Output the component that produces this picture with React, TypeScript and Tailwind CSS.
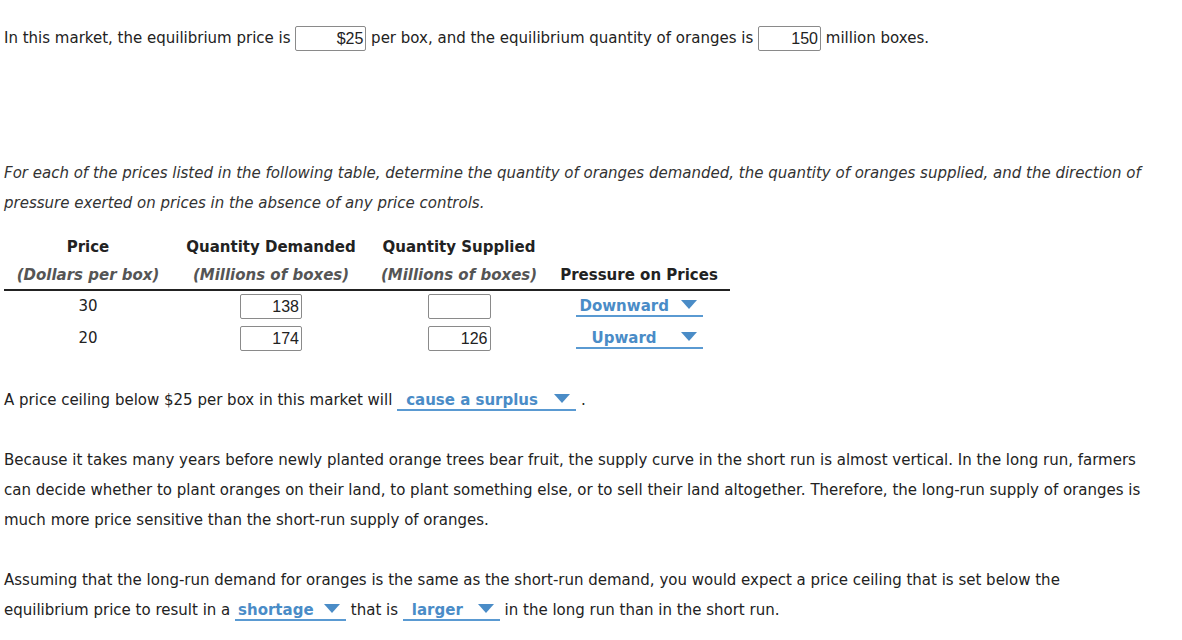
const font = { fontFamily: '"DejaVu Sans", Verdana, sans-serif' };

const Box = ({ value, w }: { value: string; w: string }) => (
  <span
    className={`inline-block ${w} h-[25px] border border-[#8a8a8a] rounded-[2px] bg-white text-right pr-[2px] leading-[23px] text-[16px] text-[#222] align-middle font-['Liberation_Sans',Arial,sans-serif]`}
  >
    {value}
  </span>
);

const Drop = ({ label, w, pl }: { label: string; w: string; pl: string }) => (
  <span className={`inline-flex items-end ${w} ${pl} border-b-2 border-[#5a9ad2] h-[20px] align-baseline`}>
    <span className="font-bold text-[#4a8cc7] leading-[18px]">{label}</span>
    <span className="flex-1" />
    <svg width="16" height="10" viewBox="0 0 16 10" className="mb-[5px] mr-[6px]">
      <polygon points="0,0 16,0 8,9" fill="#4a8cc7" />
    </svg>
  </span>
);

export default function App() {
  return (
    <div className="w-[1182px] h-[640px] bg-white text-[15px] text-[#222] pl-[4px]" style={font}>
      <div className="w-[1145px]">
        <div className="pt-[25px] leading-[26px]">
          In this market, the equilibrium price is <Box value="$25" w="w-[71px]" /> per box, and the equilibrium quantity of oranges is{' '}
          <Box value="150" w="w-[63px]" /> million boxes.
        </div>

        <p className="mt-[107px] italic leading-[30px] text-[#333]">
          For each of the prices listed in the following table, determine the quantity of oranges demanded, the quantity of oranges supplied, and the direction of pressure exerted on prices in the absence of any price controls.
        </p>

        <table className="mt-[14px] w-[726px] border-collapse">
          <thead>
            <tr className="h-[30px]">
              <th className="w-[168px] font-bold text-center">Price</th>
              <th className="w-[198px] font-bold text-center">Quantity Demanded</th>
              <th className="w-[178px] font-bold text-center">Quantity Supplied</th>
              <th />
            </tr>
            <tr className="h-[28px] border-b-2 border-[#222]">
              <th className="italic font-bold text-[#555]">(Dollars per box)</th>
              <th className="italic font-bold text-[#555]">(Millions of boxes)</th>
              <th className="italic font-bold text-[#555]">(Millions of boxes)</th>
              <th className="font-bold">Pressure on Prices</th>
            </tr>
          </thead>
          <tbody>
            <tr className="h-[31px]">
              <td className="text-center pt-[1px]">30</td>
              <td className="text-center pt-[1px]"><Box value="138" w="w-[62px]" /></td>
              <td className="text-center pt-[1px]"><Box value="" w="w-[63px]" /></td>
              <td className="text-center pt-[1px]"><Drop label="Downward" w="w-[127px]" pl="pl-[4px]" /></td>
            </tr>
            <tr className="h-[34px]">
              <td className="text-center">20</td>
              <td className="text-center"><Box value="174" w="w-[62px]" /></td>
              <td className="text-center"><Box value="126" w="w-[63px]" /></td>
              <td className="text-center"><Drop label="Upward" w="w-[127px]" pl="pl-[16px]" /></td>
            </tr>
          </tbody>
        </table>

        <p className="mt-[30px] leading-[30px]">
          A price ceiling below $25 per box in this market will <Drop label="cause a surplus" w="w-[179px]" pl="pl-[9px]" /> .
        </p>

        <p className="mt-[30px] leading-[30px]">
          Because it takes many years before newly planted orange trees bear fruit, the supply curve in the short run is almost vertical. In the long run, farmers can decide whether to plant oranges on their land, to plant something else, or to sell their land altogether. Therefore, the long-run supply of oranges is much more price sensitive than the short-run supply of oranges.
        </p>

        <p className="mt-[30px] leading-[30px]">
          Assuming that the long-run demand for oranges is the same as the short-run demand, you would expect a price ceiling that is set below the equilibrium price to result in a <Drop label="shortage" w="w-[111px]" pl="pl-[3px]" /> that is{' '}
          <Drop label="larger" w="w-[97px]" pl="pl-[9px]" /> in the long run than in the short run.
        </p>
      </div>
    </div>
  );
}
